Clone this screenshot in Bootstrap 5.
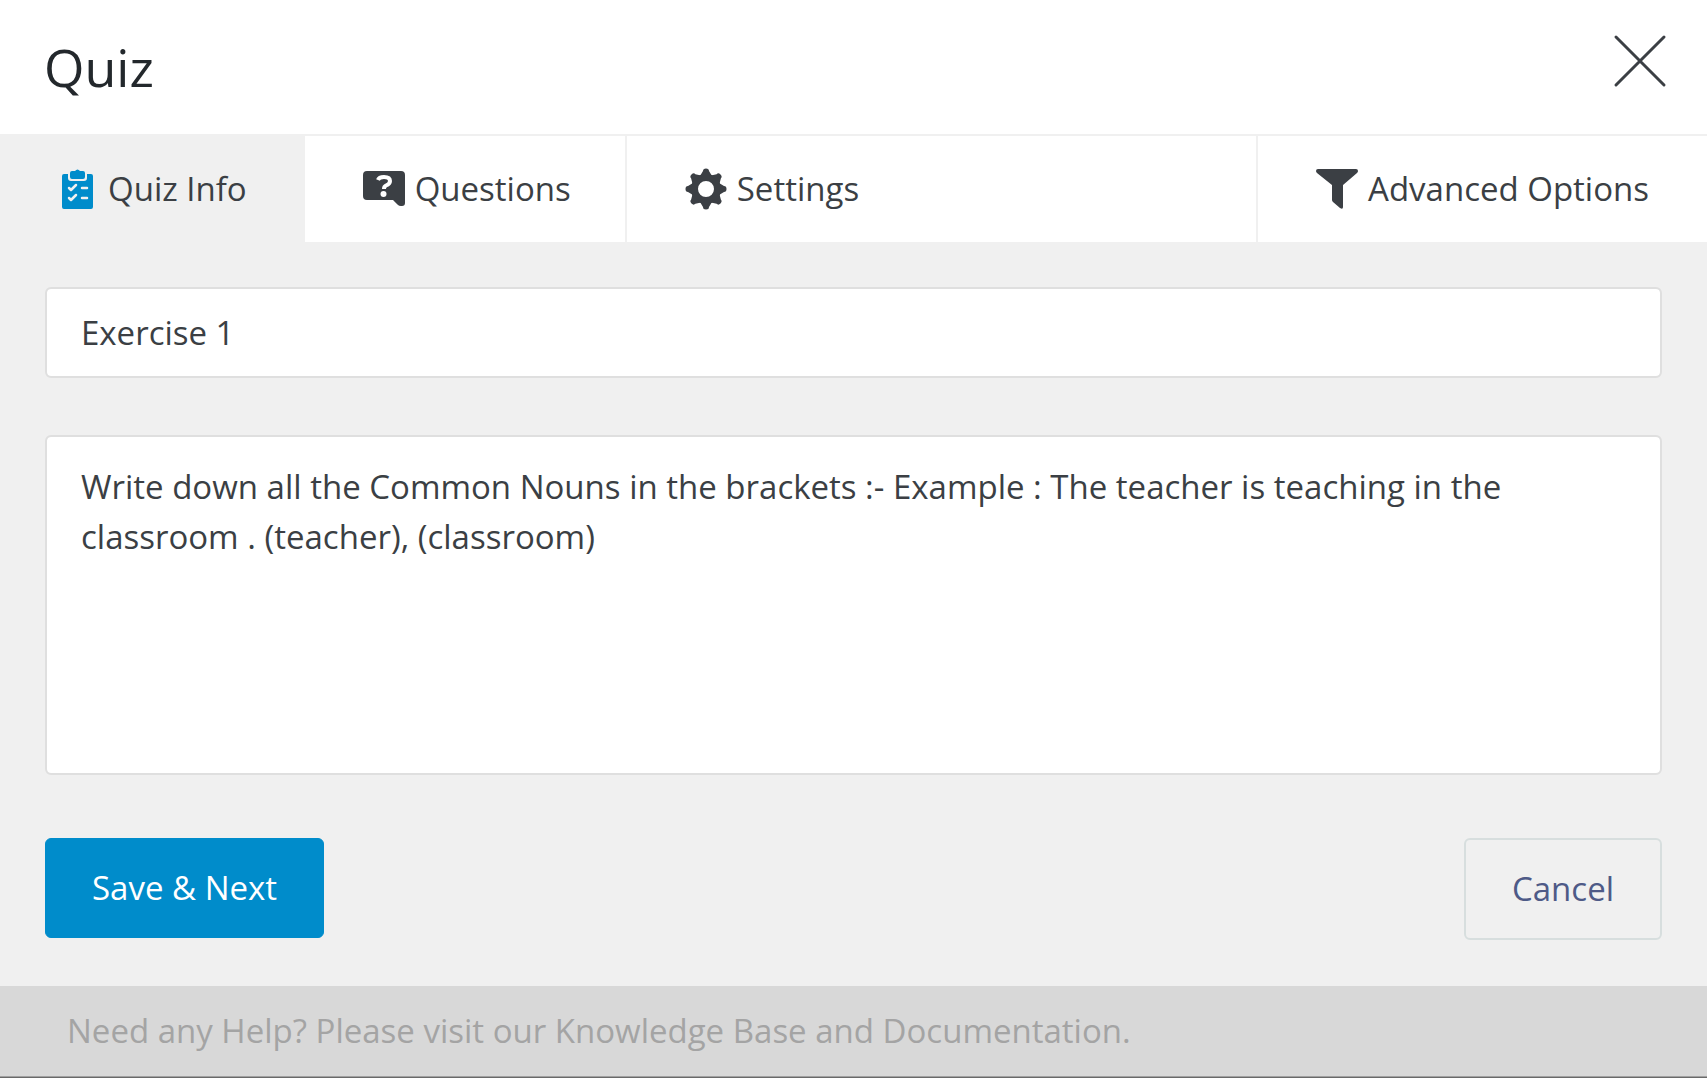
<!DOCTYPE html>
<html lang="en">
<head>
<meta charset="utf-8">
<meta name="viewport" content="width=device-width, initial-scale=1">
<title>Quiz</title>
<link href="https://cdn.jsdelivr.net/npm/bootstrap@5.3.0/dist/css/bootstrap.min.css" rel="stylesheet">
<style>
  body { background: #696969; color: #3b3f44; font-family: "Open Sans", "Noto Sans", sans-serif; font-size: 33px; line-height: 50px; }
  .quiz-panel { background: #f0f0f0; }
  .quiz-head { height: 136px; padding: 0 40px 0 44px; border-bottom: 2px solid #f0f0f0; }
  .quiz-title { font-size: 52px; line-height: 60px; color: #23282c; }
  .close-x { width: 54px; height: 54px; margin-bottom: 12px; }
  .quiz-tabs .tab-link { color: inherit; background: #fff; height: 106px; padding: 0 58px; border-radius: 0; gap: 10px; }
  .quiz-tabs .tab-link.active { background: #f0f0f0; color: inherit; gap: 15px; padding-left: 62px; }
  .quiz-tabs .divide { border-right: 2px solid #f0f0f0; padding-right: 54px; }
  .quiz-tabs .divide-start { border-left: 2px solid #f0f0f0; }
  .quiz-body { padding: 45px 45px 46px; }
  .quiz-field, .quiz-field:focus { font-size: inherit; line-height: 50px; color: inherit; border: 2px solid #dfdfdf; border-radius: 6px; padding: 20px 34px; box-shadow: none; }
  .quiz-title-field { height: 91px; margin-bottom: 57px; }
  .quiz-text-field, .quiz-text-field:focus { height: 340px; margin-bottom: 63px; padding-top: 25px; resize: none; }
  .quiz-btn { font-size: inherit; line-height: 50px; border-radius: 6px; padding: 24px 46px; }
  .btn-save, .btn-save:hover { background: #008ccb; color: #fff; border: 1px solid #008ccb; }
  .btn-quit { background: transparent; color: #4e5a87; border: 2px solid #d7dede; }
  .quiz-foot { background: #d8d8d8; color: #a4a4a4; padding: 20px 67px; border-bottom: 1px solid #a0a0a0; }
</style>
</head>
<body>
<main class="quiz-panel">
  <header class="quiz-head bg-white d-flex align-items-center justify-content-between">
    <h1 class="quiz-title fw-normal m-0">Quiz</h1>
    <button type="button" class="btn p-0 border-0 d-flex" aria-label="Close">
      <svg class="close-x" viewBox="0 0 54 54" fill="none" stroke="#3b3f44" stroke-width="3" stroke-linecap="round"><path d="M3 3 51 51M51 3 3 51"/></svg>
    </button>
  </header>
  <nav class="quiz-tabs nav bg-white flex-nowrap">
    <a href="#" class="nav-link tab-link active d-flex align-items-center" aria-current="page">
      <svg width="31" height="40" viewBox="0 0 31 40"><path fill="#008ccb" d="M2 5h4v4q0 3 3 3h13q3 0 3-3V5h4q2 0 2 2v31q0 2-2 2H2q-2 0-2-2V7q0-2 2-2Z"/><path fill="#008ccb" d="M10 2h3q2.500-3 5 0h3q2 0 2 2v4q0 2-2 2H10q-2 0-2-2V4q0-2 2-2Z"/><path d="m7 19 2 2 5-5M7 29l2 2 5-5M20 19h5M20 29h5" fill="none" stroke="#f0f0f0" stroke-width="2.500" stroke-linecap="round" stroke-linejoin="round"/></svg>
      <span>Quiz Info</span>
    </a>
    <a href="#" class="nav-link tab-link divide d-flex align-items-center">
      <svg width="42" height="36" viewBox="0 0 42 36"><path fill="#3b3f44" d="M4 0h34q4 0 4 4v28q0 3-3 3h-1q-2 0-3-1l-5-5H4q-4 0-4-4V4q0-4 4-4Z"/><path d="M15 9q1-3 6-3 6 0 6 4 0 3-4 4.500-2 1-2 3.500" fill="none" stroke="#fff" stroke-width="4"/><circle cx="20.500" cy="23" r="3" fill="#fff"/></svg>
      <span>Questions</span>
    </a>
    <a href="#" class="nav-link tab-link d-flex align-items-center">
      <svg width="42" height="42" viewBox="-21 -21 42 42"><circle r="11.500" fill="none" stroke="#3b3f44" stroke-width="7"/><g fill="#3b3f44"><g id="cog-pair"><path d="M-6-13-3-18Q-3-20.500 0-20.500T3-18L6-13ZM-6 13-3 18Q-3 20.500 0 20.500T3 18L6 13Z"/><path d="M-13-6-18-3Q-20.500-3-20.500 0T-18 3L-13 6ZM13-6 18-3Q20.500-3 20.500 0T18 3L13 6Z"/></g><use href="#cog-pair" transform="rotate(45)"/></g></svg>
      <span>Settings</span>
    </a>
    <a href="#" class="nav-link tab-link divide-start d-flex align-items-center ms-auto">
      <svg width="42" height="40" viewBox="0 0 42 40"><path fill="#3b3f44" d="M2 0h38q2 0 2 2 0 1-1 2L27 16v22q0 3-3 1l-7-6q-1-1-1-2V16L1 4Q0 3 0 2q0-2 2-2Z"/></svg>
      <span>Advanced Options</span>
    </a>
  </nav>
  <form class="quiz-body">
    <input type="text" class="form-control quiz-field quiz-title-field" aria-label="Quiz title" value="Exercise 1">
    <textarea class="form-control quiz-field quiz-text-field" aria-label="Quiz summary">Write down all the Common Nouns in the brackets :- Example : The teacher is teaching in the classroom . (teacher), (classroom)</textarea>
    <div class="d-flex justify-content-between align-items-start">
      <button type="button" class="btn quiz-btn btn-save">Save &amp; Next</button>
      <button type="button" class="btn quiz-btn btn-quit">Cancel</button>
    </div>
  </form>
  <footer class="quiz-foot">Need any Help? Please visit our Knowledge Base and Documentation.</footer>
</main>
<script src="https://cdn.jsdelivr.net/npm/bootstrap@5.3.0/dist/js/bootstrap.bundle.min.js"></script>
</body>
</html>
